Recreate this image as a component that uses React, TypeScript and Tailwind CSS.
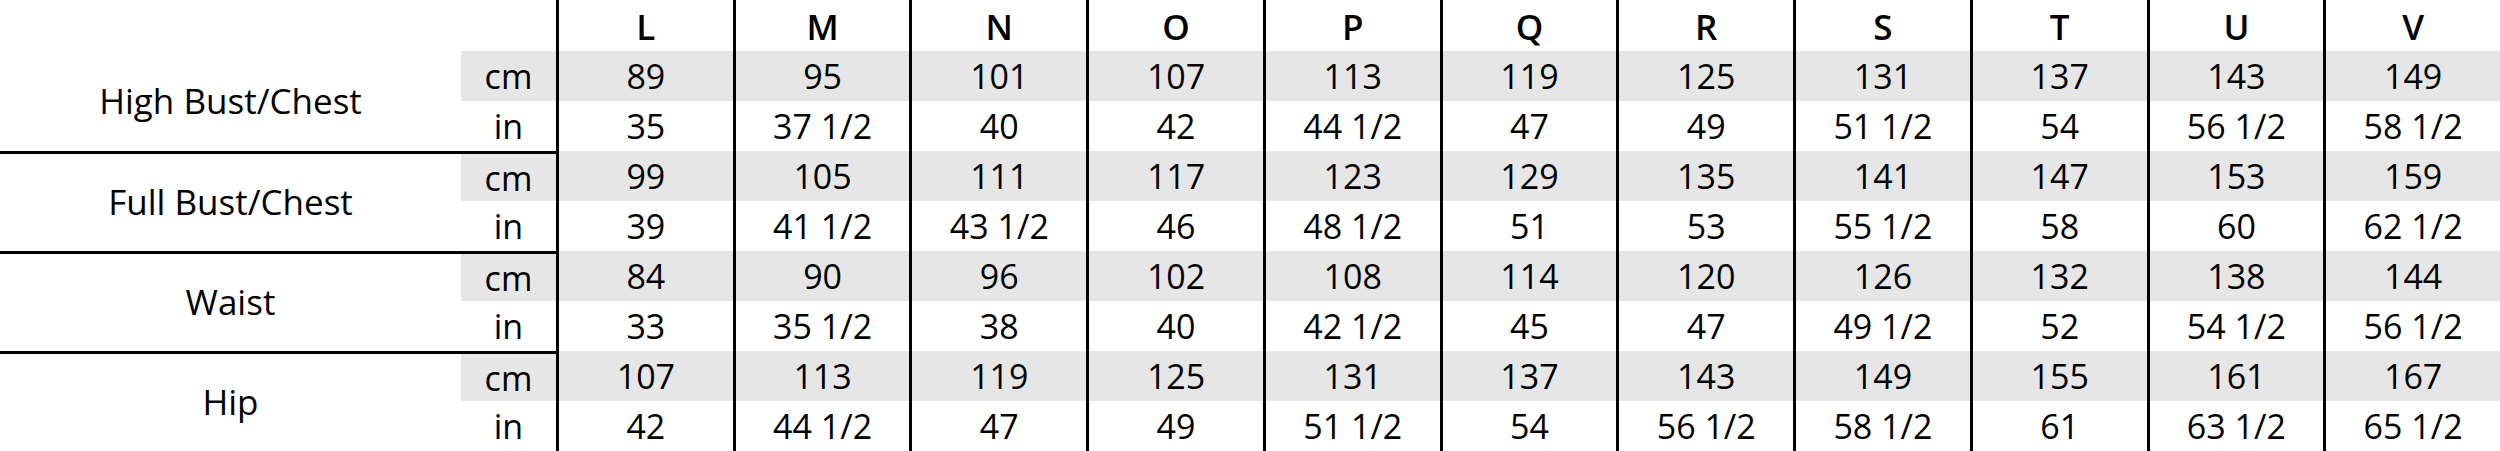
const sizes = ['L', 'M', 'N', 'O', 'P', 'Q', 'R', 'S', 'T', 'U', 'V'];

type Measure = { label: string; cm: string[]; inch: string[] };

const measures: Measure[] = [
  {
    label: 'High Bust/Chest',
    cm: ['89', '95', '101', '107', '113', '119', '125', '131', '137', '143', '149'],
    inch: ['35', '37 1/2', '40', '42', '44 1/2', '47', '49', '51 1/2', '54', '56 1/2', '58 1/2'],
  },
  {
    label: 'Full Bust/Chest',
    cm: ['99', '105', '111', '117', '123', '129', '135', '141', '147', '153', '159'],
    inch: ['39', '41 1/2', '43 1/2', '46', '48 1/2', '51', '53', '55 1/2', '58', '60', '62 1/2'],
  },
  {
    label: 'Waist',
    cm: ['84', '90', '96', '102', '108', '114', '120', '126', '132', '138', '144'],
    inch: ['33', '35 1/2', '38', '40', '42 1/2', '45', '47', '49 1/2', '52', '54 1/2', '56 1/2'],
  },
  {
    label: 'Hip',
    cm: ['107', '113', '119', '125', '131', '137', '143', '149', '155', '161', '167'],
    inch: ['42', '44 1/2', '47', '49', '51 1/2', '54', '56 1/2', '58 1/2', '61', '63 1/2', '65 1/2'],
  },
];

export default function App() {
  return (
    <div className="grid h-[451px] w-[2500px] grid-cols-[461px_95px_repeat(11,minmax(0,1fr))] grid-rows-[51px_repeat(8,50px)] bg-white font-['Open_Sans',sans-serif] text-[34px] leading-none text-black">
      {/* header */}
      <div className="col-span-2" />
      {sizes.map((s) => (
        <div
          key={s}
          className="flex items-center justify-center border-l-[3px] border-black pt-[1px] text-[35px] font-semibold"
        >
          {s}
        </div>
      ))}

      {measures.map((m, i) => {
        const top = i > 0 ? 'border-t-[3px] border-black' : '';
        return [
          <div
            key={m.label}
            className={`row-span-2 flex items-center justify-center pb-[2px] text-[35px] font-medium ${top}`}
          >
            {m.label}
          </div>,
          <div
            key={m.label + '-cm'}
            className={`flex items-center justify-center bg-[#e6e6e6] ${top}`}
          >
            cm
          </div>,
          ...m.cm.map((v, j) => (
            <div
              key={m.label + '-cm-' + j}
              className="flex items-center justify-center border-l-[3px] border-black bg-[#e6e6e6]"
            >
              {v}
            </div>
          )),
          <div key={m.label + '-in'} className="flex items-center justify-center">
            in
          </div>,
          ...m.inch.map((v, j) => (
            <div
              key={m.label + '-in-' + j}
              className="flex items-center justify-center border-l-[3px] border-black"
            >
              {v}
            </div>
          )),
        ];
      })}
    </div>
  );
}
